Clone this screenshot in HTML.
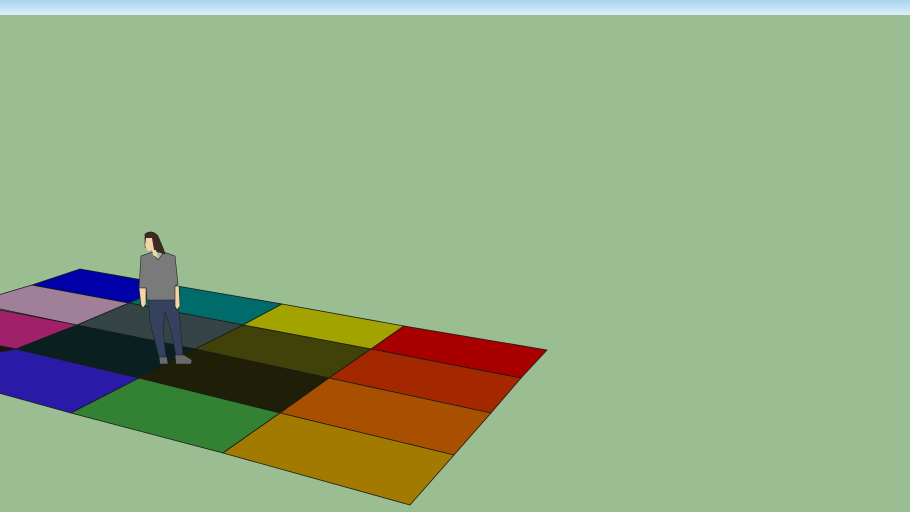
<!DOCTYPE html>
<html><head><meta charset="utf-8"><style>
html,body{margin:0;padding:0;width:910px;height:512px;overflow:hidden;background:#9abd91}
svg{display:block}
</style></head><body>
<svg width="910" height="512" viewBox="0 0 910 512" xmlns="http://www.w3.org/2000/svg">
<defs><linearGradient id="sky" x1="0" y1="0" x2="0" y2="1"><stop offset="0" stop-color="#a9d3f2"/><stop offset="1" stop-color="#dbeefa"/></linearGradient></defs>
<rect x="0" y="0" width="910" height="512" fill="#9abd91"/>
<rect x="0" y="0" width="910" height="15" fill="url(#sky)"/>
<g stroke="#1a1a1a" stroke-width="0.8" stroke-linejoin="round">
<!-- left edge cells -->
<polygon points="32,285 129,303 77,325 0,309 -5,296" fill="#a08098"/>
<polygon points="-5,309 77,325 16,349 -5,345" fill="#a0206a"/>
<polygon points="-5,345 16,349 -5,353" fill="#1a1010"/>
<polygon points="-5,353 16,349 139,378 71,413 -5,392" fill="#2a1aa8"/>
<!-- row 1 -->
<polygon points="80,269 171,285 129,303 32,285" fill="#0000a8"/>
<polygon points="171,285 282,304 243,325 129,303" fill="#006b6b"/>
<polygon points="282,304 404,326 371,349 243,325" fill="#a3a300"/>
<polygon points="404,326 547,350 521,378 371,349" fill="#a80000"/>
<!-- row 2 -->
<polygon points="129,303 243,325 195,349 77,325" fill="#354545"/>
<polygon points="243,325 371,349 329,378 195,349" fill="#41410a"/>
<polygon points="371,349 521,378 491,413 329,378" fill="#a32800"/>
<!-- row 3 -->
<polygon points="77,325 195,349 139,378 16,349" fill="#0a2020"/>
<polygon points="195,349 329,378 280,413 139,378" fill="#1f1f08"/>
<polygon points="329,378 491,413 454,455 280,413" fill="#a85000"/>
<!-- row 4 -->
<polygon points="139,378 280,413 223,453 71,413" fill="#338233"/>
<polygon points="280,413 454,455 410,505 223,453" fill="#a37a00"/>
</g>
<!-- person -->
<g stroke="#222" stroke-width="0.6" stroke-linejoin="round">
<path d="M148,297 L150,322 L159,357 L166,357 L163,330 L165,312 L171,330 L176,356 L183,355 L180,322 L177,297 Z" fill="#34415f"/>
<path d="M159,357 L167,357 L168,364 L160,364 Z" fill="#6a6a6a"/>
<path d="M175,355 L184,355 L192,360 L191,364 L176,364 Z" fill="#6a6a6a"/>
<path d="M141,256 L152,252 L158,260 L164,252 L175,256 L178,284 L175,286 L176,300 L147,300 L146,288 L139,288 Z" fill="#7a7a7a"/>
<path d="M139,288 L146,288 L146,304 L143,308 L141,305 Z" fill="#f2d6a8"/>
<path d="M175,286 L179,286 L180,306 L177,310 L175,306 Z" fill="#f2d6a8"/>
<path d="M145,234 Q152,229 158,236 L163,248 L165,254 L158,252 L150,250 L145,247 Z" fill="#3d2a24"/>
<path d="M146,238 L152,238 L154,250 L148,251 L145,246 Z" fill="#f2d6a8" stroke="none"/>
<path d="M152,250 L156,250 L158,258 L153,255 Z" fill="#f2d6a8" stroke="none"/>
</g>
</svg>
</body></html>
